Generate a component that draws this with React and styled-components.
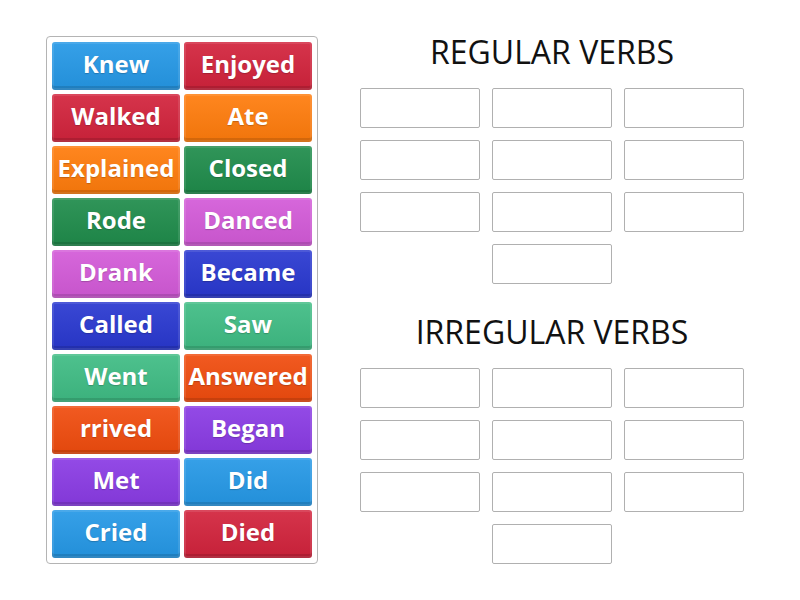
import styled, { createGlobalStyle } from 'styled-components'

const GlobalStyle = createGlobalStyle`
  body {
    margin: 0;
    background: #fff;
    font-family: "Open Sans", "Liberation Sans", sans-serif;
  }
`

const colors = {
  blue: '#2598e6',
  red: '#d2233c',
  orange: '#ff7c0c',
  green: '#1f8c4b',
  pink: '#d35ad8',
  navy: '#2938d0',
  mint: '#3fbc84',
  flame: '#f04c0e',
  purple: '#8a3be4',
}

const words = [
  ['Knew', 'blue'], ['Enjoyed', 'red'],
  ['Walked', 'red'], ['Ate', 'orange'],
  ['Explained', 'orange'], ['Closed', 'green'],
  ['Rode', 'green'], ['Danced', 'pink'],
  ['Drank', 'pink'], ['Became', 'navy'],
  ['Called', 'navy'], ['Saw', 'mint'],
  ['Went', 'mint'], ['Answered', 'flame'],
  ['rrived', 'flame'], ['Began', 'purple'],
  ['Met', 'purple'], ['Did', 'blue'],
  ['Cried', 'blue'], ['Died', 'red'],
]

const Page = styled.div`
  display: flex;
  align-items: flex-start;
  padding: 36px 0 0 46px;
`

const Bank = styled.div`
  display: grid;
  grid-template-columns: 128px 128px;
  grid-auto-rows: 48px;
  gap: 4px;
  padding: 5px;
  border: 1px solid #b4b4b4;
  border-radius: 4px;
`

const Tile = styled.div`
  display: flex;
  align-items: center;
  justify-content: center;
  padding-bottom: 6px;
  box-sizing: border-box;
  border-radius: 3px;
  background: ${(p) => p.$color};
  background-image: linear-gradient(rgba(255, 255, 255, 0.08), rgba(0, 0, 0, 0.06));
  box-shadow: inset 0 -4px 0 rgba(0, 0, 0, 0.12), inset 0 0 0 2px rgba(255, 255, 255, 0.1);
  color: #fff;
  font-weight: 700;
  font-size: 24px;
  text-shadow: 0 1px 1px rgba(0, 0, 0, 0.2);
  white-space: nowrap;
`

const Groups = styled.div`
  display: flex;
  flex-direction: column;
  width: 384px;
  margin-left: 42px;
  margin-top: -4px;
`

const Group = styled.div`
  display: flex;
  flex-direction: column;
  & + & {
    margin-top: 28px;
  }
`

const Heading = styled.h2`
  margin: 0 0 16px;
  height: 40px;
  line-height: 40px;
  text-align: center;
  font-weight: 400;
  font-size: 32px;
  color: #111;
`

const Slots = styled.div`
  display: flex;
  flex-wrap: wrap;
  justify-content: center;
  gap: 12px;
`

const Slot = styled.div`
  width: 120px;
  height: 40px;
  box-sizing: border-box;
  border: 1px solid #b0b0b0;
  border-radius: 2px;
  background: #fff;
`

const GroupBlock = ({ title }) => (
  <Group>
    <Heading>{title}</Heading>
    <Slots>
      {Array.from({ length: 10 }).map((_, i) => (
        <Slot key={i} />
      ))}
    </Slots>
  </Group>
)

const App = () => {
  return (
    <>
      <GlobalStyle />
      <Page>
        <Bank>
          {words.map(([w, c]) => (
            <Tile key={w} $color={colors[c]}>{w}</Tile>
          ))}
        </Bank>
        <Groups>
          <GroupBlock title="REGULAR VERBS" />
          <GroupBlock title="IRREGULAR VERBS" />
        </Groups>
      </Page>
    </>
  )
}

export default App
